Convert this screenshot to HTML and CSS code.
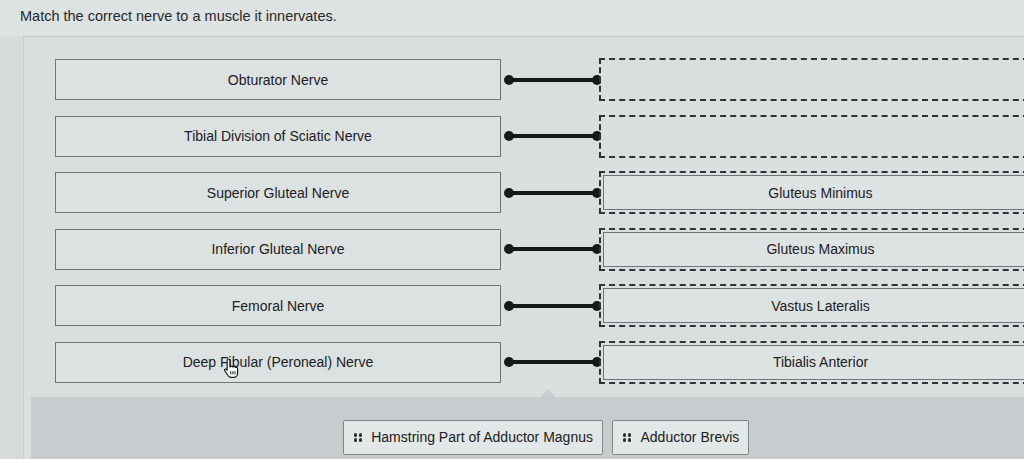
FILE: index.html
```html
<!DOCTYPE html>
<html lang="en">
<head>
<meta charset="utf-8">
<title>Match nerves</title>
<link rel="stylesheet" href="styles.css">
</head>
<body>
<div class="page">
  <div class="title">Match the correct nerve to a muscle it innervates.</div>
  <div class="panel">
    <div class="rows">
      <div class="row">
        <div class="nerve">Obturator Nerve</div>
        <svg class="conn" width="100" height="14" viewBox="0 0 100 14"><line x1="8" y1="7" x2="96" y2="7"/><circle cx="8" cy="7" r="5"/><circle cx="96" cy="7" r="5"/></svg>
        <div class="target"></div>
      </div>
      <div class="row">
        <div class="nerve">Tibial Division of Sciatic Nerve</div>
        <svg class="conn" width="100" height="14" viewBox="0 0 100 14"><line x1="8" y1="7" x2="96" y2="7"/><circle cx="8" cy="7" r="5"/><circle cx="96" cy="7" r="5"/></svg>
        <div class="target"></div>
      </div>
      <div class="row">
        <div class="nerve">Superior Gluteal Nerve</div>
        <svg class="conn" width="100" height="14" viewBox="0 0 100 14"><line x1="8" y1="7" x2="96" y2="7"/><circle cx="8" cy="7" r="5"/><circle cx="96" cy="7" r="5"/></svg>
        <div class="target"><div class="placed">Gluteus Minimus</div></div>
      </div>
      <div class="row">
        <div class="nerve">Inferior Gluteal Nerve</div>
        <svg class="conn" width="100" height="14" viewBox="0 0 100 14"><line x1="8" y1="7" x2="96" y2="7"/><circle cx="8" cy="7" r="5"/><circle cx="96" cy="7" r="5"/></svg>
        <div class="target"><div class="placed">Gluteus Maximus</div></div>
      </div>
      <div class="row">
        <div class="nerve">Femoral Nerve</div>
        <svg class="conn" width="100" height="14" viewBox="0 0 100 14"><line x1="8" y1="7" x2="96" y2="7"/><circle cx="8" cy="7" r="5"/><circle cx="96" cy="7" r="5"/></svg>
        <div class="target"><div class="placed">Vastus Lateralis</div></div>
      </div>
      <div class="row">
        <div class="nerve"><span class="cursor-wrap">Deep Fibular (Peroneal) Nerve<svg class="cursor" width="17" height="22" viewBox="0 0 16 20"><path d="M5 1.5c1 0 1.5.6 1.5 1.5v6l.3-.1c.4-1 2.2-1 2.5.2.5-.8 2-.7 2.3.4.6-.5 2-.3 2.1.9v4.6c0 2-1.4 3.9-3.2 3.9H7.6c-1.2 0-2-.6-2.7-1.6L1.6 12.6c-.7-1 .4-2.1 1.4-1.4l.9.8V3c0-.9.4-1.5 1.1-1.5z" fill="#fff" stroke="#111" stroke-width="1.1" stroke-linejoin="round"/><path d="M7.3 13v3M9.3 13v3M11.3 13v3" stroke="#111" stroke-width="0.9"/></svg></span></div>
        <svg class="conn" width="100" height="14" viewBox="0 0 100 14"><line x1="8" y1="7" x2="96" y2="7"/><circle cx="8" cy="7" r="5"/><circle cx="96" cy="7" r="5"/></svg>
        <div class="target"><div class="placed">Tibialis Anterior</div></div>
      </div>
    </div>
    <div class="tray">
      <div class="chip"><span class="grip"><i></i><i></i><i></i><i></i></span>Hamstring Part of Adductor Magnus</div>
      <div class="chip"><span class="grip"><i></i><i></i><i></i><i></i></span>Adductor Brevis</div>
    </div>
  </div>
</div>
</body>
</html>
```

FILE: styles.css
```css
html, body {
  margin: 0;
  padding: 0;
}
body {
  background: #d4dada;
  font-family: "Liberation Sans", Arial, sans-serif;
  color: #1d2021;
}
.page {
  width: 1024px;
  height: 459px;
  overflow: hidden;
  background: #d6dcdc;
}
.title {
  height: 36px;
  box-sizing: border-box;
  padding: 8px 0 0 20px;
  font-size: 14.5px;
  color: #25292b;
  background: #dde2e2;
}
.panel {
  margin-left: 23px;
  border-top: 1px solid #c3c9ca;
  border-left: 1px solid #c9cfd0;
  background: #d9dfdf;
  padding-top: 22px;
  height: 423px;
  box-sizing: border-box;
  display: flex;
  flex-direction: column;
}
.rows {
  display: flex;
  flex-direction: column;
  gap: 15.6px;
  padding-left: 31px;
}
.row {
  display: flex;
  align-items: center;
  height: 41px;
}
.nerve {
  width: 446px;
  height: 41px;
  box-sizing: border-box;
  border: 1px solid #6f7577;
  background: #dce2e2;
  display: flex;
  align-items: center;
  justify-content: center;
  font-size: 14px;
  flex-shrink: 0;
}
.cursor-wrap {
  position: relative;
}
.cursor {
  position: absolute;
  left: 40px;
  top: 3px;
}
.conn {
  flex-shrink: 0;
  display: block;
}
.conn line {
  stroke: #161819;
  stroke-width: 4;
}
.conn circle {
  fill: #161819;
}
.target {
  width: 440px;
  height: 43px;
  box-sizing: border-box;
  border: 2px dashed #2f3335;
  flex-shrink: 0;
  margin-left: -2px;
  padding: 2px 0 2px 2px;
  display: flex;
}
.placed {
  flex: 1;
  border: 1px solid #6f7577;
  border-right: none;
  background: #dde3e3;
  display: flex;
  align-items: center;
  justify-content: center;
  font-size: 14px;
}
.tray {
  margin-top: 14px;
  margin-left: 7px;
  flex: 1;
  background: #c7cdce;
  position: relative;
  display: flex;
  justify-content: center;
  align-items: flex-start;
  gap: 9px;
  padding: 23px 0 0 37px;
}
.tray::before {
  content: "";
  position: absolute;
  top: -8px;
  left: 509px;
  border-left: 8px solid transparent;
  border-right: 8px solid transparent;
  border-bottom: 8px solid #c9cfd0;
}
.chip {
  height: 35px;
  box-sizing: border-box;
  border: 1px solid #80878a;
  border-radius: 2px;
  background: #e2e7e7;
  display: flex;
  align-items: center;
  padding: 0 9px 0 10px;
  font-size: 14px;
  color: #1d2021;
}
.grip {
  display: grid;
  grid-template-columns: 3.5px 3.5px;
  gap: 1.5px;
  margin-right: 9px;
}
.grip i {
  display: block;
  width: 3.5px;
  height: 3.5px;
  border-radius: 50%;
  background: #2a2d2f;
}
```
